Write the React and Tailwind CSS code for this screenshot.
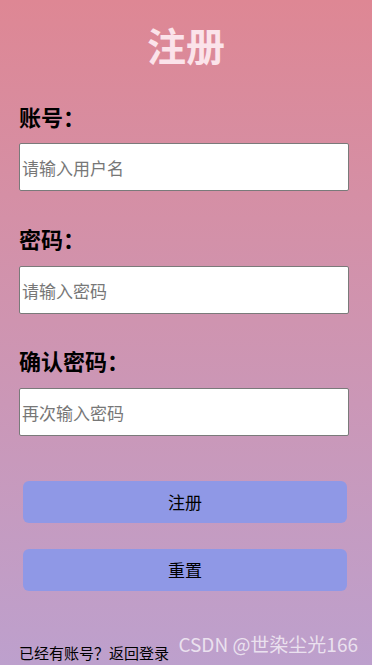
import React from 'react';

export default function App() {
    return (
        <div
            className="relative min-h-[665px] w-full overflow-hidden bg-gradient-to-b from-[#de8794] to-[#bda0cd]"
            style={{ fontFamily: '"Noto Sans CJK SC", "Noto Sans", sans-serif' }}
        >
            <h1 className="pt-[20px] text-center text-[39px] font-bold leading-[48px] text-[#fbe3ea]">注册</h1>

            <form className="flex flex-col px-[19px]">
                <label className="mt-[34px] text-[22px] font-bold leading-[28px] text-black">账号：</label>
                <input
                    type="text"
                    placeholder="请输入用户名"
                    className="mt-[13px] h-[48px] w-[330px] rounded-[2px] border border-[#7a7a7a] bg-white px-[2px] text-[17px] text-black placeholder:text-[#777]"
                />

                <label className="mt-[33px] text-[22px] font-bold leading-[28px] text-black">密码：</label>
                <input
                    type="password"
                    placeholder="请输入密码"
                    className="mt-[14px] h-[48px] w-[330px] rounded-[2px] border border-[#7a7a7a] bg-white px-[2px] text-[17px] text-black placeholder:text-[#777]"
                />

                <label className="mt-[32px] text-[22px] font-bold leading-[28px] text-black">确认密码：</label>
                <input
                    type="password"
                    placeholder="再次输入密码"
                    className="mt-[14px] h-[48px] w-[330px] rounded-[2px] border border-[#7a7a7a] bg-white px-[2px] text-[17px] text-black placeholder:text-[#777]"
                />

                <div className="mt-[45px] flex flex-col gap-[26px] pl-[4px]">
                    <button type="button" className="h-[42px] w-[324px] rounded-[6px] bg-[#8f98e6] text-[17px] text-black">注册</button>
                    <button type="button" className="h-[42px] w-[324px] rounded-[6px] bg-[#8f98e6] text-[17px] text-black">重置</button>
                </div>

                <p className="mt-[52px] text-[15px] leading-[20px] text-black">已经有账号？返回登录</p>
            </form>

            <div className="absolute bottom-[10px] right-[14px] text-[19px] leading-[22px] text-white/70">CSDN @世染尘光166</div>
        </div>
    );
}
